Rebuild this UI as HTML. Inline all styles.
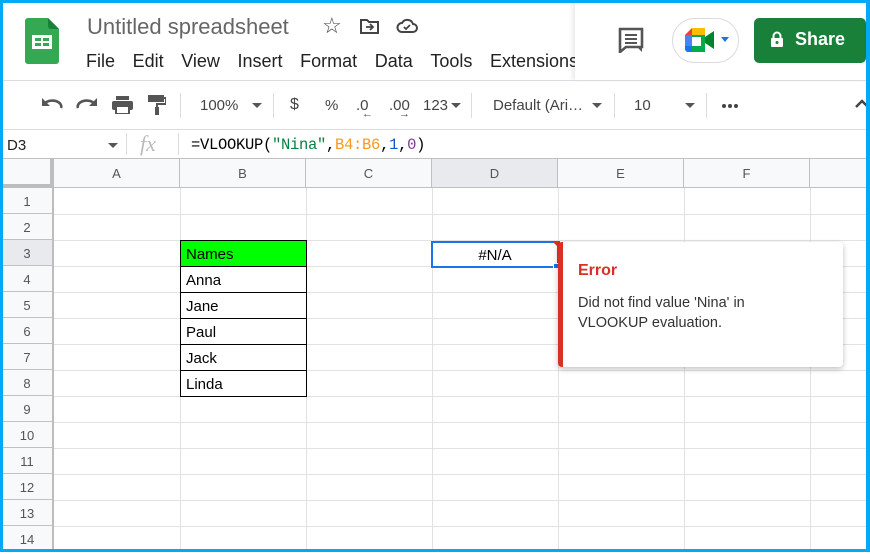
<!DOCTYPE html>
<html><head><meta charset="utf-8"><style>
*{margin:0;padding:0;box-sizing:border-box}
body{width:870px;height:552px;overflow:hidden;background:#fff;font-family:"Liberation Sans",Arial,sans-serif;position:relative}
.a{position:absolute}
.frame{position:absolute;left:0;top:0;width:870px;height:552px;border:3px solid #03a9f4;border-right-width:4px;pointer-events:none;z-index:50}
.menu span{margin-right:17.6px}
.tb{color:#444;font-size:15px}
.ch{position:absolute;top:159px;height:29px;background:#f8f9fa;border-right:1px solid #c0c0c0;border-bottom:1px solid #c0c0c0;color:#555;font-size:13px;text-align:center;line-height:29px}
.rh{position:absolute;left:2px;width:52px;height:26px;background:#f8f9fa;border-bottom:1px solid #c0c0c0;border-right:2px solid #bdbdbd;color:#555;font-size:13px;text-align:center;line-height:28px}
.hl{position:absolute;left:54px;right:0;height:1px;background:#e2e2e2}
.vl{position:absolute;top:188px;bottom:0;width:1px;background:#e2e2e2}
.nm{position:absolute;left:180px;width:127px;height:27px;border:1px solid #000;font-size:15px;padding-left:5px;line-height:28px;color:#000}
</style></head><body>
<svg class="a" style="left:25px;top:18px" width="34" height="46" viewBox="0 0 34 46"><path d="M3 0h20l11 11v32a3 3 0 0 1-3 3H3a3 3 0 0 1-3-3V3a3 3 0 0 1 3-3z" fill="#34a853"/><path d="M23 0l11 11H26a3 3 0 0 1-3-3z" fill="#188038"/><rect x="7" y="17" width="20" height="14" fill="#fff"/><rect x="10" y="20" width="6" height="3" fill="#34a853"/><rect x="18" y="20" width="6" height="3" fill="#34a853"/><rect x="10" y="25" width="6" height="3" fill="#34a853"/><rect x="18" y="25" width="6" height="3" fill="#34a853"/></svg>
<div class="a" style="left:87px;top:14px;font-size:22px;color:#666">Untitled spreadsheet</div>
<div class="a" style="left:322px;top:13px;font-size:22px;color:#444">☆</div>
<svg class="a" style="left:360px;top:18px" width="20" height="16"><path d="M1 2h6l2 2h9v11H1z" fill="none" stroke="#444" stroke-width="2"/><path d="M6 9h7M10 6l3 3-3 3" fill="none" stroke="#444" stroke-width="1.8"/></svg>
<svg class="a" style="left:396px;top:18px" width="22" height="16"><path d="M6 14h11a4 4 0 0 0 0-8 6 6 0 0 0-11-1 4.5 4.5 0 0 0 0 9z" fill="none" stroke="#444" stroke-width="2"/><path d="M8 9l2 2 4-4" fill="none" stroke="#444" stroke-width="1.8"/></svg>
<div class="a menu" style="left:86px;top:51px;font-size:18px;color:#222;white-space:nowrap"><span>File</span><span>Edit</span><span>View</span><span>Insert</span><span>Format</span><span>Data</span><span>Tools</span><span>Extensions</span></div>
<div class="a" style="left:575px;top:0;width:295px;height:80px;background:#fff;box-shadow:-3px 0 4px rgba(0,0,0,.08)"></div>
<svg class="a" style="left:618px;top:27px" width="26" height="26"><path d="M2 2h22v18H8l-6 5z" fill="none" stroke="#555" stroke-width="2.6"/><path d="M7 8h12M7 12h12M7 16h12" stroke="#555" stroke-width="2"/><path d="M24 20v5l-5-5z" fill="#555"/></svg>
<div class="a" style="left:672px;top:18px;width:67px;height:45px;border:1px solid #dadce0;border-radius:23px"></div>
<svg class="a" style="left:685px;top:28px" width="44" height="24"><path d="M0 7l7-7h13v10H0z" fill="#fbbc04"/><path d="M0 7h7v11H0z" fill="#4285f4"/><path d="M0 7L7 0v7z" fill="#ea4335"/><path d="M0 18h20v6H3a3 3 0 0 1-3-3z" fill="#1a73e8"/><path d="M7 7h13v17H7z" fill="#00ac47"/><rect x="7" y="9" width="9" height="9" fill="#fff"/><path d="M20 9l9-6v18l-9-6z" fill="#00832d"/><path d="M36 9h8l-4 5z" fill="#1a73e8"/></svg>
<div class="a" style="left:754px;top:18px;width:112px;height:45px;background:#188038;border-radius:5px;color:#fff;font-size:18px;font-weight:bold;line-height:43px;padding-left:41px">Share</div>
<svg class="a" style="left:770px;top:31px" width="14" height="17"><path d="M3.5 7V5a3.5 3.5 0 0 1 7 0v2" fill="none" stroke="#fff" stroke-width="2"/><rect x="1" y="7" width="12" height="9" rx="1" fill="#fff"/><circle cx="7" cy="11.5" r="1.5" fill="#188038"/></svg>
<div class="a" style="left:0;top:80px;width:870px;height:1px;background:#dadce0"></div>
<svg class="a" style="left:41px;top:96px" width="22" height="14"><path d="M4 7a9 6 0 0 1 16 5" fill="none" stroke="#555" stroke-width="2.6"/><path d="M1 2v8h8z" fill="#555"/></svg>
<svg class="a" style="left:76px;top:96px" width="22" height="14"><path d="M18 7a9 6 0 0 0-16 5" fill="none" stroke="#555" stroke-width="2.6"/><path d="M21 2v8h-8z" fill="#555"/></svg>
<svg class="a" style="left:112px;top:96px" width="21" height="18"><path d="M4 0h13v4H4z" fill="#555"/><rect x="0" y="5" width="21" height="9" rx="2" fill="#555"/><path d="M4 10h13v8H4z" fill="#fff" stroke="#555" stroke-width="2"/></svg>
<svg class="a" style="left:148px;top:95px" width="18" height="20"><rect x="0" y="0" width="16" height="7" fill="#555"/><path d="M16 3h2v6H9v3" fill="none" stroke="#555" stroke-width="2"/><rect x="7" y="12" width="4" height="8" fill="#555"/></svg>
<div class="a" style="left:180px;top:93px;width:1px;height:25px;background:#dadce0"></div>
<div class="a tb" style="left:200px;top:97px">100%</div>
<div class="a" style="left:252px;top:103px;border:5px solid transparent;border-top-color:#555"></div>
<div class="a" style="left:273px;top:93px;width:1px;height:25px;background:#dadce0"></div>
<div class="a tb" style="left:290px;top:96px;font-size:16px">$</div>
<div class="a tb" style="left:325px;top:97px">%</div>
<div class="a tb" style="left:356px;top:97px">.0<div style="font-size:11px;margin-top:-6px;margin-left:6px">←</div></div>
<div class="a tb" style="left:389px;top:97px">.00<div style="font-size:11px;margin-top:-6px;margin-left:10px">→</div></div>
<div class="a tb" style="left:423px;top:97px">123</div>
<div class="a" style="left:451px;top:103px;border:5px solid transparent;border-top-color:#555"></div>
<div class="a" style="left:471px;top:93px;width:1px;height:25px;background:#dadce0"></div>
<div class="a tb" style="left:493px;top:97px">Default (Ari…</div>
<div class="a" style="left:592px;top:103px;border:5px solid transparent;border-top-color:#555"></div>
<div class="a" style="left:614px;top:93px;width:1px;height:25px;background:#dadce0"></div>
<div class="a tb" style="left:634px;top:97px">10</div>
<div class="a" style="left:685px;top:103px;border:5px solid transparent;border-top-color:#555"></div>
<div class="a" style="left:706px;top:93px;width:1px;height:25px;background:#dadce0"></div>
<div class="a" style="left:722px;top:104px;width:4px;height:4px;border-radius:2px;background:#444;box-shadow:6px 0 #444,12px 0 #444"></div>
<svg class="a" style="left:855px;top:99px" width="14" height="10"><path d="M1 8l6-6 6 6" fill="none" stroke="#444" stroke-width="2.4"/></svg>
<div class="a" style="left:0;top:129px;width:870px;height:1px;background:#dadce0"></div>
<div class="a" style="left:7px;top:137px;font-size:15px;color:#222">D3</div>
<div class="a" style="left:108px;top:143px;border:5px solid transparent;border-top-color:#555"></div>
<div class="a" style="left:126px;top:133px;width:1px;height:22px;background:#dadce0"></div>
<div class="a" style="left:140px;top:131px;font-family:'Liberation Serif',serif;font-style:italic;font-size:22px;color:#bbb">fx</div>
<div class="a" style="left:178px;top:133px;width:1px;height:22px;background:#dadce0"></div>
<div class="a" style="left:191px;top:136px;font-family:'Liberation Mono',monospace;font-size:15.5px;color:#000;letter-spacing:-0.3px">=VLOOKUP(<span style="color:#0b8043">"Nina"</span>,<span style="color:#f7981d">B4:B6</span>,<span style="color:#1155cc">1</span>,<span style="color:#7e3794">0</span>)</div>
<div class="a" style="left:0;top:158px;width:870px;height:1px;background:#c0c0c0"></div>
<div class="ch" style="left:2px;width:52px;border-right:4px solid #bdbdbd;border-bottom:4px solid #bdbdbd"></div>
<div class="ch" style="left:54px;width:126px">A</div>
<div class="ch" style="left:180px;width:126px">B</div>
<div class="ch" style="left:306px;width:126px">C</div>
<div class="ch" style="left:432px;width:126px;background:#e8eaed">D</div>
<div class="ch" style="left:558px;width:126px">E</div>
<div class="ch" style="left:684px;width:126px">F</div>
<div class="ch" style="left:810px;width:60px"></div>
<div class="vl" style="left:180px"></div><div class="vl" style="left:306px"></div><div class="vl" style="left:432px"></div><div class="vl" style="left:558px"></div><div class="vl" style="left:684px"></div><div class="vl" style="left:810px"></div>
<div class="rh" style="top:188px">1</div><div class="hl" style="top:214px"></div>
<div class="rh" style="top:214px">2</div><div class="hl" style="top:240px"></div>
<div class="rh" style="top:240px;background:#e8eaed">3</div><div class="hl" style="top:266px"></div>
<div class="rh" style="top:266px">4</div><div class="hl" style="top:292px"></div>
<div class="rh" style="top:292px">5</div><div class="hl" style="top:318px"></div>
<div class="rh" style="top:318px">6</div><div class="hl" style="top:344px"></div>
<div class="rh" style="top:344px">7</div><div class="hl" style="top:370px"></div>
<div class="rh" style="top:370px">8</div><div class="hl" style="top:396px"></div>
<div class="rh" style="top:396px">9</div><div class="hl" style="top:422px"></div>
<div class="rh" style="top:422px">10</div><div class="hl" style="top:448px"></div>
<div class="rh" style="top:448px">11</div><div class="hl" style="top:474px"></div>
<div class="rh" style="top:474px">12</div><div class="hl" style="top:500px"></div>
<div class="rh" style="top:500px">13</div><div class="hl" style="top:526px"></div>
<div class="rh" style="top:526px">14</div>
<div class="nm" style="top:240px;background:#00ff00">Names</div>
<div class="nm" style="top:266px">Anna</div>
<div class="nm" style="top:292px">Jane</div>
<div class="nm" style="top:318px">Paul</div>
<div class="nm" style="top:344px">Jack</div>
<div class="nm" style="top:370px">Linda</div>
<div class="a" style="left:431px;top:241px;width:128px;height:27px;border:2px solid #1a73e8;text-align:center;font-size:15px;line-height:26px;color:#000">#N/A</div>
<div class="a" style="left:553px;top:263px;width:6px;height:6px;background:#1a73e8;border:1px solid #fff"></div>
<div class="a" style="left:552px;top:241px;border:4px solid transparent;border-top-color:#d93025;border-right-color:#d93025"></div>
<div class="a" style="left:558px;top:242px;width:285px;height:125px;background:#fff;border-left:5px solid #d93025;border-radius:4px;box-shadow:0 2px 6px rgba(0,0,0,.25)">
<div style="position:absolute;left:15px;top:20px;color:#d93025;font-weight:bold;font-size:16px">Error</div>
<div style="position:absolute;left:15px;top:51px;color:#333;font-size:14.5px;line-height:20px;width:230px">Did not find value 'Nina' in VLOOKUP evaluation.</div>
</div>
<div class="frame"></div>
</body></html>
